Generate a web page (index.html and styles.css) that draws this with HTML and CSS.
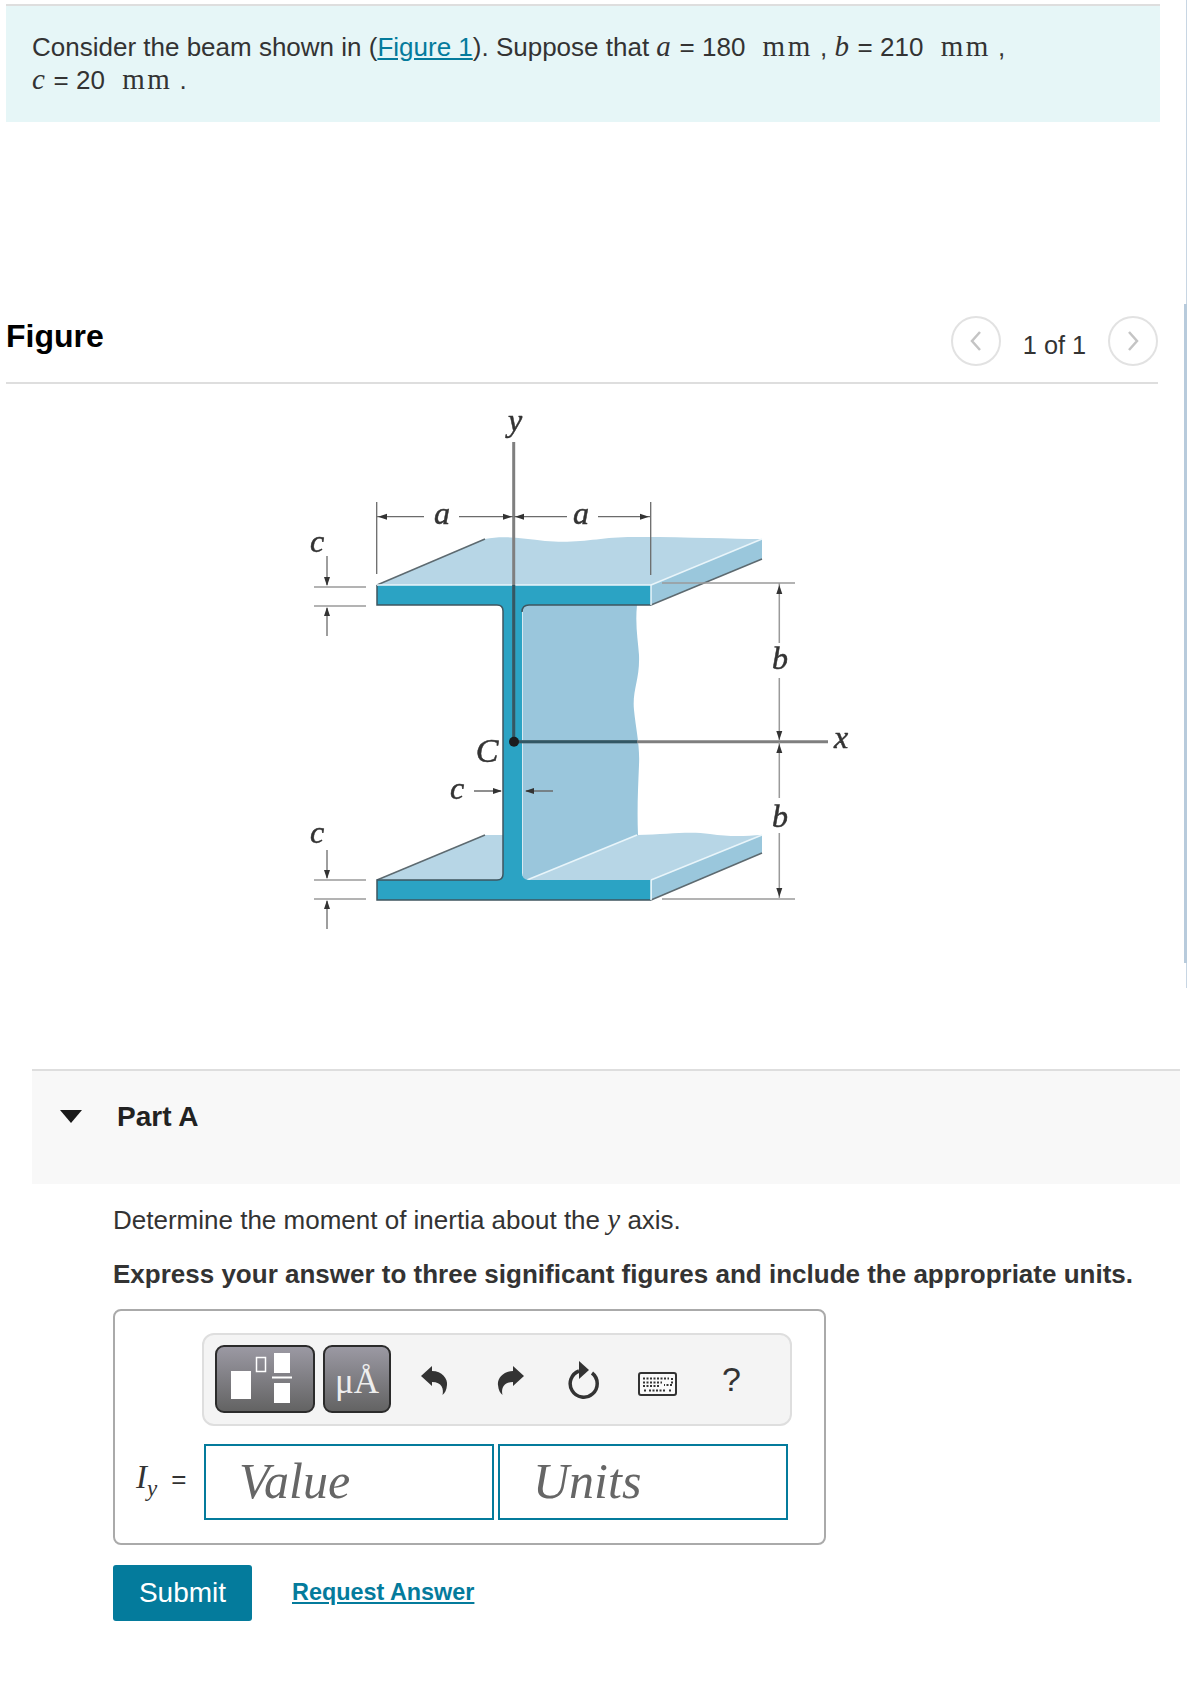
FILE: index.html
```html
<!DOCTYPE html>
<html lang="en">
<head>
<meta charset="utf-8">
<title>Beam moment of inertia</title>
<link rel="stylesheet" href="styles.css">
</head>
<body>
<div class="scroll-track"><div class="scroll-thumb"></div></div>
<section class="stem">
  <p class="stem-text">Consider the beam shown in (<a href="#" class="link">Figure 1</a>). Suppose that <i class="var var-gap">a</i> = 180 <span class="unit">mm</span> , <i class="var var-gap">b</i> = 210 <span class="unit">mm</span> ,<br><i class="var var-gap">c</i> = 20 <span class="unit">mm</span> .</p>
</section>
<header class="fig-head">
  <h2 class="fig-title">Figure</h2>
  <div class="pager">
    <span class="pager-btn"><svg class="chev" viewBox="0 0 16 24"><path d="M12 3 L4 12 L12 21"/></svg></span>
    <span class="pager-text">1 of 1</span>
    <span class="pager-btn"><svg class="chev" viewBox="0 0 16 24"><path d="M4 3 L12 12 L4 21"/></svg></span>
  </div>
</header>
<div class="figure">
<svg class="beam" width="1187" height="685" viewBox="0 384 1187 685">
  <!-- top flange -->
  <path class="face-light" d="M377 585 L485 539 C505 535 525 539 545 541 C585 544 600 536 640 537 C690 537 730 539 762 539 L651 585 Z"/>
  <path class="face-side" d="M651 585 L762 539 V559 L651 605 Z"/>
  <path class="hl" d="M651 585 L762 539"/>
  <path class="edge-dark" d="M377 585 L485 539"/>
  <path class="edge-dark" d="M651 605 L762 559"/>
  <!-- web panel -->
  <path class="panel" d="M522 605 H637 C635 625 638 640 639 655 C640 680 632 690 634 710 C636 730 640 745 639 765 C638 790 637 810 638 835 L527 880 H522 Z"/>
  <!-- bottom flange faces -->
  <path class="face-light" d="M377 880 L485 835 H503 V880 Z"/>
  <path class="face-light" d="M527 880 L637 835 C670 834 690 831 710 834 C730 837 745 836 762 835 L651 880 Z"/>
  <path class="face-side" d="M651 880 L762 835 V853 L651 900 Z"/>
  <path class="hl" d="M527 880 L637 835 M651 880 L762 835 M522 605 V876"/>
  <path class="hl" d="M651 880 V900"/>
  <path class="edge-dark" d="M377 880 L485 835"/>
  <path class="edge-dark" d="M651 900 L762 853"/>
  <!-- I section -->
  <path class="teal" d="M377 585 H651 V605 H529 Q522 605 522 612 V873 Q522 880 529 880 H651 V900 H377 V880 H497 Q503 880 503 874 V611 Q503 605 497 605 H377 Z"/>
  <path class="outline" d="M377 585 V605 H497 Q503 605 503 611 V874 Q503 880 497 880 H377 V900 H651"/>
  <path class="outline" d="M651 605 H529 Q522 605 522 612"/>
  <path class="hl" d="M377 585 H651 V605 M651 880 V900"/>
  <!-- axes -->
  <path class="axis" d="M513.7 442 V742"/>
  <path class="axis-over" d="M513.7 585 V742"/>
  <path class="axis" d="M514 741.7 H828"/>
  <path class="axis-over" d="M514 741.7 H637"/>
  <circle class="dot" cx="514" cy="741.7" r="5"/>
  <!-- dimension a -->
  <path class="dim" d="M376.7 502 V574 M650.7 502 V575 M377 516.7 H424 M459 516.7 H513 M514 516.7 H567 M598 516.7 H650"/>
  <path class="tip" d="M378 516.7 L387 513.7 V519.7 Z M512 516.7 L503 513.7 V519.7 Z M515 516.7 L524 513.7 V519.7 Z M649 516.7 L640 513.7 V519.7 Z"/>
  <!-- dimension b -->
  <path class="dim-light" d="M662 583 H795 M662 899 H795 M779.3 583 V643 M779.3 678 V741 M779.3 742 V798 M779.3 833 V898"/>
  <path class="tip" d="M779.3 585 L776.3 594 H782.3 Z M779.3 740 L776.3 731 H782.3 Z M779.3 744 L776.3 753 H782.3 Z M779.3 897 L776.3 888 H782.3 Z"/>
  <!-- dimension c, top -->
  <path class="dim-light" d="M314 587 H366 M314 606 H366 M314 880 H366 M314 899 H366"/>
  <path class="dim" d="M327 556 V585 M327 608 V636 M327 850 V878 M327 901 V929 M474 791 H501 M526 791 H553"/>
  <path class="tip" d="M327 586 L324 577 H330 Z M327 607 L324 616 H330 Z M327 879 L324 870 H330 Z M327 900 L324 909 H330 Z M502 791 L493 788 V794 Z M525 791 L534 788 V794 Z"/>
  <!-- labels -->
  <text class="lbl" x="442" y="524">a</text>
  <text class="lbl" x="581" y="524">a</text>
  <text class="lbl" x="515" y="431">y</text>
  <text class="lbl" x="780" y="669">b</text>
  <text class="lbl" x="780" y="827">b</text>
  <text class="lbl" x="841" y="748">x</text>
  <text class="lbl" x="317" y="552">c</text>
  <text class="lbl" x="317" y="843">c</text>
  <text class="lbl" x="457" y="799">c</text>
  <text class="lbl lbl-big" x="487" y="762">C</text>
</svg>
</div>
<section class="part">
  <div class="part-head">
    <svg class="caret" width="22" height="14" viewBox="0 0 22 14"><path d="M0 0 H22 L11 13 Z"/></svg>
    <h3 class="part-title">Part A</h3>
  </div>
  <div class="part-body">
    <p class="q">Determine the moment of inertia about the <i class="var">y</i> axis.</p>
    <p class="q q-bold">Express your answer to three significant figures and include the appropriate units.</p>
    <div class="answer">
      <div class="toolbar">
        <span class="tool-btn tool-wide">
          <svg width="95" height="66" viewBox="218 1346 95 66">
            <rect class="w" x="231" y="1371" width="20" height="28"/>
            <rect class="o" x="256.5" y="1357.5" width="9" height="14"/>
            <rect class="w" x="274" y="1353" width="16" height="20"/>
            <rect class="w" x="272" y="1376.5" width="20" height="2"/>
            <rect class="w" x="274" y="1383" width="16" height="20"/>
          </svg>
        </span>
        <span class="tool-btn tool-narrow">μÅ</span>
        <svg class="tool-icon undo" width="28" height="30" viewBox="0 0 28 30"><path d="M1 11 L12 1 V6 C22 6 28 14 27 20 C26.5 25 25 28 22.5 30 C24 24 22 17 12 17 V21 Z"/></svg>
        <svg class="tool-icon redo" width="28" height="30" viewBox="0 0 28 30"><path d="M27 11 L16 1 V6 C6 6 0 14 1 20 C1.500 25 3 28 5.500 30 C4 24 6 17 16 17 V21 Z"/></svg>
        <svg class="tool-icon reload" width="34" height="38" viewBox="0 0 34 38"><path class="arc" d="M14 10 A13.500 13.500 0 1 0 27 12"/><path d="M14 0 L24 9 L14 18 Z"/></svg>
        <svg class="tool-icon kbd" width="39" height="24" viewBox="0 0 39 24"><rect class="kbd-case" x="1" y="1" width="37" height="22" rx="2"/><path class="kbd-keys" d="M5 6.500 H31 M34 6 V13 H26 M5 10.500 H24 M5 14 H22 M6 18.500 H8 M11 18.500 H28 M31 18.500 H33"/></svg>
        <span class="help">?</span>
      </div>
      <div class="answer-row">
        <span class="eq"><i class="eq-i">I<sub>y</sub></i><span class="eq-sign">=</span></span>
        <div class="field">Value</div>
        <div class="field">Units</div>
      </div>
    </div>
    <div class="actions">
      <button class="submit" type="button">Submit</button>
      <a href="#" class="link req">Request Answer</a>
    </div>
  </div>
</section>
</body>
</html>
```
FILE: styles.css
```css
* { box-sizing: border-box; }
html, body { margin: 0; padding: 0; background: #fff; }
body {
  width: 1187px;
  height: 1686px;
  overflow: hidden;
  position: relative;
  font-family: "Liberation Sans", Arial, sans-serif;
  color: #333;
}
.scroll-track {
  position: absolute;
  top: 0;
  right: 0;
  width: 1px;
  height: 988px;
  background: #c8d6e3;
}
.scroll-thumb {
  position: absolute;
  top: 304px;
  left: -2px;
  width: 3px;
  height: 659px;
  background: #b8cbdc;
}
.stem {
  margin: 4px 27px 0 6px;
  height: 118px;
  padding: 24px 26px 0;
  background: #e6f6f7;
  border-top: 2px solid #dedede;
}
.stem-text {
  margin: 0;
  font-size: 26px;
  line-height: 32px;
}
.var { font-family: "Liberation Serif", serif; font-size: 29px; }
.var-gap { margin-right: 1.500px; }
.unit { font-family: "Liberation Serif", serif; font-size: 29px; letter-spacing: 2.500px; margin-left: 10px; }
.link { color: #047b9c; }
.fig-head {
  margin: 195px 29px 0 6px;
  height: 67px;
  padding-bottom: 16px;
  display: flex;
  justify-content: space-between;
  align-items: flex-end;
  border-bottom: 2px solid #dedede;
}
.fig-title {
  margin: 0 0 12px;
  font-size: 32px;
  line-height: 36px;
  color: #000;
  font-weight: bold;
}
.pager {
  display: flex;
  align-items: center;
  gap: 0;
}
.pager-btn {
  width: 50px;
  height: 50px;
  border: 2px solid #e2e2e2;
  border-radius: 50%;
  display: flex;
  align-items: center;
  justify-content: center;
}
.pager-text {
  width: 107px;
  text-align: center;
  font-size: 25.300px;
  margin-top: 8px;
}
.chev { width: 16px; height: 24px; }
.chev path { fill: none; stroke: #c4c4c4; stroke-width: 2.500; }
.figure { height: 685px; }
.beam { display: block; filter: blur(.45px); }
.face-light { fill: #b7d6e6; }
.face-side { fill: #9ac7dc; }
.panel { fill: #9ac6dc; }
.teal { fill: #2ba3c4; }
.hl { fill: none; stroke: #e9f5fa; stroke-width: 1.500; }
.edge-dark { fill: none; stroke: #5d6a70; stroke-width: 1.500; }
.outline { fill: none; stroke: #3f565f; stroke-width: 1.500; }
.axis { fill: none; stroke: #7f7f7f; stroke-width: 3; }
.axis-over { fill: none; stroke: #1f4e5e; stroke-width: 3; opacity: .8; }
.dot { fill: #1c1c1e; }
.dim { fill: none; stroke: #6b6b6b; stroke-width: 1.300; }
.dim-light { fill: none; stroke: #9a9a9a; stroke-width: 1.500; }
.tip { fill: #333; }
.lbl {
  font-family: "Liberation Serif", serif;
  font-style: italic;
  font-size: 32px;
  fill: #333;
  stroke: #333;
  stroke-width: .5px;
  text-anchor: middle;
}
.lbl-big { font-size: 34px; }
.part { margin: 0 7px 0 32px; }
.part-head {
  height: 115px;
  background: #f8f8f8;
  border-top: 2px solid #dedede;
  padding: 28px 0 0 28px;
  display: flex;
  align-items: flex-start;
}
.caret { margin-top: 11px; fill: #1a1a1a; }
.part-title {
  margin: 0 0 0 35px;
  font-size: 28px;
  line-height: 36px;
  color: #222;
}
.part-body { padding: 0 0 0 81px; }
.q {
  margin: 0;
  font-size: 26px;
  line-height: 30px;
  padding-top: 20px;
  white-space: nowrap;
}
.q-bold { font-weight: bold; padding-top: 24px; }
.answer {
  margin-top: 20px;
  width: 713px;
  height: 236px;
  border: 2px solid #aaa;
  border-radius: 8px;
  padding: 22px 0 0 87px;
}
.toolbar {
  width: 590px;
  height: 93px;
  background: #f4f4f4;
  border: 2px solid #dedede;
  border-radius: 12px;
  display: flex;
  align-items: center;
  padding-left: 11px;
}
.tool-btn {
  height: 68px;
  margin-top: -2px;
  border-radius: 9px;
  border: 2px solid #2b2b2b;
  background: linear-gradient(#9b99a3, #636363);
  display: flex;
  align-items: center;
  justify-content: center;
}
.tool-wide { width: 100px; }
.tool-wide svg { display: block; }
.tool-wide .w { fill: #fff; }
.tool-wide .o { fill: none; stroke: #fff; stroke-width: 1.500; }
.tool-narrow {
  width: 68px;
  margin-left: 8px;
  color: #eee;
  font-family: "Liberation Serif", serif;
  font-size: 35px;
  padding-top: 6px;
}
.tool-icon { fill: #333; display: block; }
.undo { margin-left: 29px; }
.redo { margin-left: 49px; }
.reload { margin-left: 40px; }
.arc { fill: none; stroke: #333; stroke-width: 3.500; }
.kbd { margin-left: 39px; margin-top: 8px; }
.kbd-case { fill: #fafafa; stroke: #333; stroke-width: 2; }
.kbd-keys { fill: none; stroke: #333; stroke-width: 2; stroke-dasharray: 2 1.500; }
.help { font-size: 34px; margin-left: 45px; color: #333; }
.answer-row {
  display: flex;
  gap: 4px;
  margin-top: 18px;
  margin-left: 2px;
  position: relative;
}
.eq {
  position: absolute;
  left: -68px;
  top: 15px;
  font-size: 24px;
  white-space: nowrap;
}
.eq-i { font-family: "Liberation Serif", serif; font-size: 33px; }
.eq-i sub { font-size: 23px; }
.eq-sign { margin-left: 14px; font-size: 26px; }
.field {
  width: 290px;
  height: 76px;
  border: 2px solid #047b9c;
  padding: 1px 0 0 33px;
  font-family: "Liberation Serif", serif;
  font-style: italic;
  font-size: 50px;
  line-height: 68px;
  color: #666;
}
.actions {
  margin-top: 20px;
  display: flex;
  align-items: center;
  gap: 40px;
}
.submit {
  width: 139px;
  height: 56px;
  border: 0;
  border-radius: 3px;
  background: #047b9c;
  color: #fff;
  font-family: "Liberation Sans", Arial, sans-serif;
  font-size: 28px;
  padding: 0;
}
.req { font-size: 23.400px; font-weight: bold; margin-top: -2px; }
```
